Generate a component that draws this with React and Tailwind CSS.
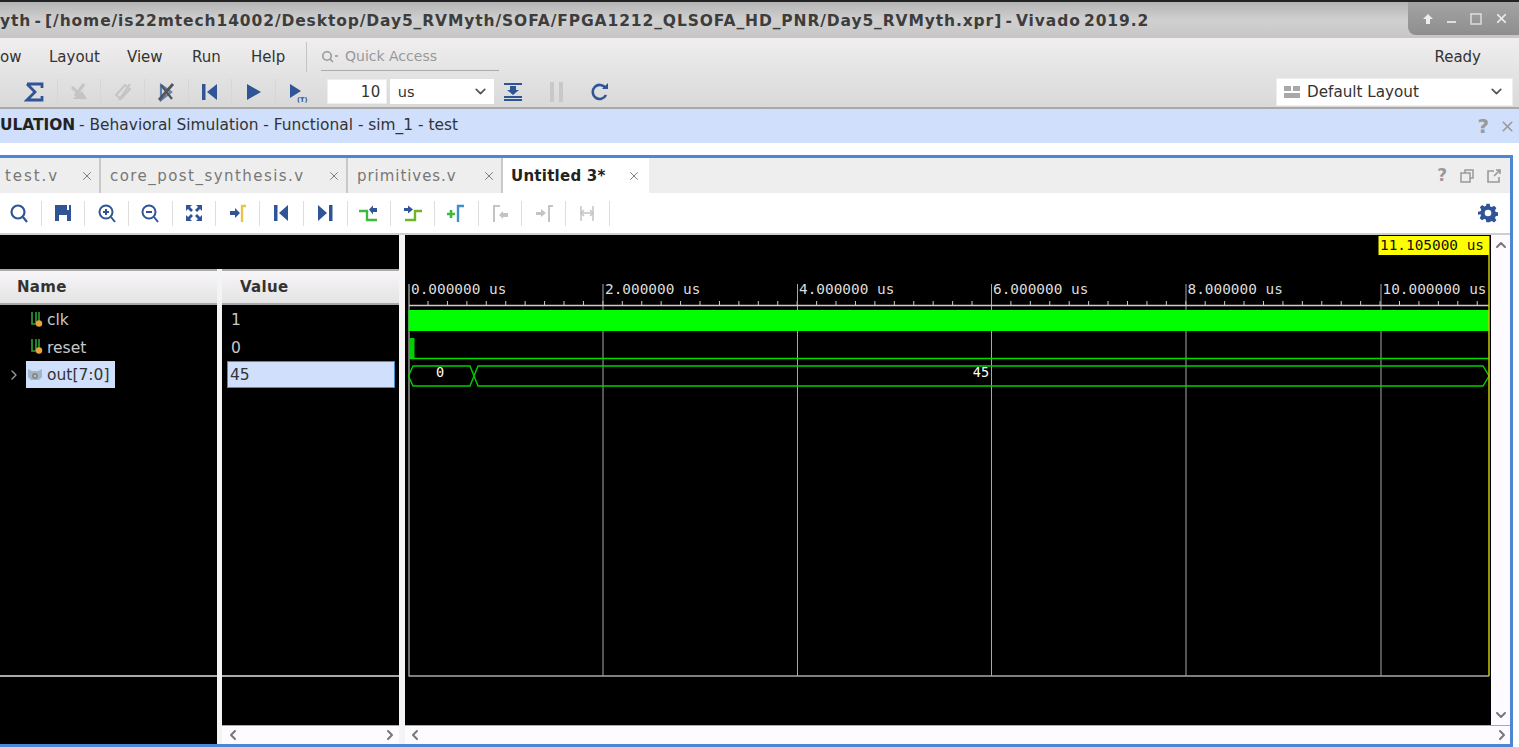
import { ChevronDown, ChevronLeft, ChevronRight, ChevronUp, X } from 'lucide-react';

const BLUE = '#2f5597';
const GREY = '#c4c4c4';

function Ic({ children, w = 22, h = 22 }) {
  return (
    <svg width={w} height={h} viewBox="0 0 22 22" fill="none">
      {children}
    </svg>
  );
}

const topTools = [
  { key: 'sigma', sep: true, el: <path d="M3 3h15v4M18 15v4H3l8-8-8-8" stroke={BLUE} strokeWidth="2.8" /> },
  { key: 'a', sep: true, el: <g><path d="M5 18h14l-5-8z" fill={GREY} /><path d="M4 6l12 12M16 3L7 15" stroke={GREY} strokeWidth="3" /></g> },
  { key: 'b', sep: true, el: <g stroke={GREY} strokeWidth="2"><path d="M4 14l9-10 5 4-9 10z" /><path d="M7 19L18 3" /></g> },
  { key: 'c', sep: true, el: <g strokeWidth="2.2"><path d="M6 4l10 7-10 8z" stroke="#5b7fb8" /><path d="M4 19L18 3" stroke="#555" strokeWidth="2.8" /><path d="M6 4l11 14" stroke="#555" /></g> },
  { key: 'first', sep: true, el: <g fill={BLUE}><rect x="3" y="3" width="3.5" height="16" /><path d="M18 3v16L8 11z" /></g> },
  { key: 'play', sep: true, el: <path d="M4 3l14 8-14 8z" fill={BLUE} /> },
  { key: 'playT', sep: false, el: <g><path d="M3 3l11 7-11 7z" fill={BLUE} /><text x="10" y="21" fontSize="6.5" fontWeight="700" fill={BLUE} fontFamily="DejaVu Sans">(T)</text></g> },
];

const waveTools = [
  <g stroke={BLUE} strokeWidth="2.2"><circle cx="10" cy="10" r="6.5" /><path d="M15 15l4 5" /></g>,
  <path d="M3 3h12v5h2V3h2v16H3zM7 13h8v6H7z" fill={BLUE} fillRule="evenodd" />,
  <g stroke={BLUE} strokeWidth="2"><circle cx="10" cy="10" r="6.5" /><path d="M15 15l4 5M10 7v6M7 10h6" /></g>,
  <g stroke={BLUE} strokeWidth="2"><circle cx="10" cy="10" r="6.5" /><path d="M15 15l4 5M7 10h6" /></g>,
  <g fill={BLUE}><path d="M3 3h6L7 5l3 3-2 2-3-3-2 2zM19 3h-6l2 2-3 3 2 2 3-3 2 2zM3 19h6l-2-2 3-3-2-2-3 3-2-2zM19 19h-6l2-2-3-3 2-2 3 3 2-2z" /></g>,
  <g><path d="M3 9h5V6l5 5-5 5v-3H3z" fill={BLUE} /><path d="M15 20V4h4" stroke="#e8c44a" strokeWidth="2.4" /></g>,
  <g fill={BLUE}><rect x="4" y="3" width="3.5" height="16" /><path d="M18 3v16L9 11z" /></g>,
  <g fill={BLUE}><rect x="15" y="3" width="3.5" height="16" /><path d="M4 3v16l9-8z" /></g>,
  <g><path d="M1 9H9V18H19" stroke="#3fb83f" strokeWidth="2.4" /><path d="M11 7.5l4-4V6h4v4h-4v2.500z" fill={BLUE} /></g>,
  <g><path d="M3 18H13V9H20" stroke="#6fb52a" strokeWidth="2.4" /><path d="M2 6h4V3.500l5 4-5 4V9H2z" fill={BLUE} /></g>,
  <g><path d="M2 12h8M6 8v8" stroke="#3fb83f" strokeWidth="2.6" /><path d="M13 20V4h6" stroke="#3f8fc9" strokeWidth="2.4" /></g>,
  <g><path d="M5 20V4h6" stroke={GREY} strokeWidth="2" /><path d="M19 11h-5V9l-4 4 4 4v-2h5z" fill={GREY} /></g>,
  <g><path d="M16 20V4h4" stroke={GREY} strokeWidth="2" /><path d="M3 10h5V7l5 4-5 4v-2H3z" fill={GREY} /></g>,
  <g stroke={GREY} strokeWidth="1.5"><path d="M5 4v15M17 4v15M6 11h10" /><path d="M8 8l-3 3 3 3M14 8l3 3-3 3" /></g>,
];

function Tab({ label, width, active, tracking }) {
  return (
    <div className={`flex h-full items-center justify-between ${active ? 'bg-white pr-[8px] pl-2 font-bold text-[#222]' : 'border-r-2 border-[#c9c9c9] pr-[5px] pl-[9px] text-[#777]'}`} style={{ width }}>
      <span className={`mt-[1px] ${tracking}`}>{label}</span>
      <X size={14} className="text-[#777]" strokeWidth={1.6} />
    </div>
  );
}

function WaveIcon({ out }) {
  if (out) {
    return (
      <svg width="16" height="16" viewBox="0 0 16 16">
        <path d="M1 2l4 2h6l4-2v8l-3 3H4l-3-3z" fill="#9fb6c6" />
        <circle cx="8" cy="9" r="3" fill="#888" />
        <circle cx="8" cy="9" r="1" fill="#ddd" />
      </svg>
    );
  }
  return (
    <svg width="16" height="18" viewBox="0 0 16 18">
      <path d="M4 1v12h4V1M11 1v9" fill="none" stroke="#2e9e3a" strokeWidth="1.6" />
      <circle cx="11" cy="12.5" r="3.2" fill="#e8a33c" />
    </svg>
  );
}

function WaveChart() {
  const majors = [603, 797.5, 991.5, 1186, 1381];
  const labels = [
    [411, '0.000000 us'],
    [605, '2.000000 us'],
    [799, '4.000000 us'],
    [993, '6.000000 us'],
    [1187.5, '8.000000 us'],
    [1382.5, '10.000000 us'],
  ];
  const minor = [];
  for (let x = 428; x < 1489; x += 19.43) minor.push(x);

  return (
    <svg width="1086" height="490" viewBox="405 235 1086 490" className="block">
      <rect x="405" y="235" width="1086" height="490" fill="#000" />
      {minor.map((x) => (
        <path key={x} d={`M${x} 301v4`} stroke="#ccc" />
      ))}
      {majors.map((x) => (
        <path key={x} d={`M${x} 284V676`} stroke="#a8a8a8" />
      ))}
      <path d="M409 284V676H1489" stroke="#a8a8a8" fill="none" strokeWidth="1.3" />
      <path d="M409 305.500H1489" stroke="#ccc" strokeWidth="1.3" />
      {labels.map(([x, t]) => (
        <text key={t} x={x} y="293.500" fill="#ddd" fontSize="14.4" fontFamily="DejaVu Sans Mono">{t}</text>
      ))}
      <rect x="408.500" y="310" width="1080.500" height="21" fill="#00ff00" />
      <rect x="409" y="338" width="5.500" height="20" fill="#00d000" />
      <path d="M409 358.500H1489" stroke="#00e000" strokeWidth="1.3" />
      <path d="M413 366H470L478 386H1483L1489 376L1483 366H478L470 386H413L408.500 376Z" fill="none" stroke="#00d000" strokeWidth="1.4" />
      <text x="440" y="377" fill="#fff" fontSize="13.500" textAnchor="middle" fontFamily="DejaVu Sans Mono">0</text>
      <text x="981" y="377" fill="#fff" fontSize="13.500" textAnchor="middle" fontFamily="DejaVu Sans Mono">45</text>
      <path d="M1489 255V676" stroke="#c8c800" strokeWidth="1.5" />
      <rect x="1378.500" y="236" width="111" height="19" fill="#ffff00" />
      <text x="1380" y="249.500" fill="#111" fontSize="14.400" fontFamily="DejaVu Sans Mono">11.105000 us</text>
    </svg>
  );
}

export default function App() {
  return (
    <div className="h-[747px] w-[1519px] overflow-hidden bg-white text-[15px] text-[#333] [font-family:'DejaVu_Sans',sans-serif]">
      {/* title bar */}
      <div className="flex h-[38px] items-start justify-between border-t-[2px] border-[#222] bg-gradient-to-b from-[#b4b4b4] via-[#d0d0d0] to-[#c6c6c6]">
        <span className="mt-[10px] text-[15.5px] leading-[18px] font-bold tracking-[0.89px] whitespace-nowrap text-[#3d3d3d] [word-spacing:-3px]">
          yth - [/home/is22mtech14002/Desktop/Day5_RVMyth/SOFA/FPGA1212_QLSOFA_HD_PNR/Day5_RVMyth.xpr] - Vivado 2019.2
        </span>
        <div className="flex h-[33px] w-[111px] items-center justify-around rounded-bl-lg bg-gradient-to-b from-[#a4a4a4] to-[#8e8e8e] pr-1 pl-2 text-white">
          <svg width="12" height="12" viewBox="0 0 12 12"><path d="M6 1l5 5H8v5H4V6H1z" fill="#eee" /></svg>
          <svg width="12" height="12" viewBox="0 0 12 12"><rect x="1" y="8" width="9" height="2" fill="#ddd" /></svg>
          <svg width="12" height="12" viewBox="0 0 12 12"><rect x="1" y="1" width="10" height="10" fill="none" stroke="#ddd" strokeWidth="1.5" /></svg>
          <X size={15} strokeWidth={2.8} className="text-[#eee]" />
        </div>
      </div>

      {/* menu + toolbar */}
      <div className="h-[71px] border-b-2 border-[#a9a9a9] bg-gradient-to-b from-[#f0eeef] to-[#d9d9d9]">
        <div className="flex h-[38px] items-center">
          <div className="flex items-center text-[15px]">
            <span className="w-[49px]">ow</span>
            <span className="w-[78px]">Layout</span>
            <span className="w-[65px]">View</span>
            <span className="w-[59px]">Run</span>
            <span className="w-[55px]">Help</span>
          </div>
          <div className="h-[30px] w-px bg-[#c4c4c4]" />
          <div className="ml-[14px] flex h-[28px] w-[178px] items-center gap-[6px] border-b border-[#aaa] text-[14px] text-[#999]">
            <svg width="18" height="14" viewBox="0 0 18 14" fill="none" stroke="#999" strokeWidth="1.6"><circle cx="6" cy="6" r="4.200" /><path d="M9 9l3 3" /><path d="M14 6h3" /></svg>
            <span>Quick Access</span>
          </div>
          <span className="mr-[38px] ml-auto text-[15px]">Ready</span>
        </div>
        <div className="flex h-[31px] items-center">
          <div className="flex w-[14px] shrink-0" />
          {topTools.map((t) => (
            <div key={t.key} className={`flex h-[26px] w-[43.7px] items-center justify-center ${t.sep ? 'border-r border-[#d6d6d6]' : ''}`}>
              <Ic>{t.el}</Ic>
            </div>
          ))}
          <div className="ml-[7px] flex h-[25px] w-[60px] items-center justify-end border border-[#eee] bg-white pt-[2px] pr-[5px] tracking-[0.5px]">10</div>
          <div className="ml-[3px] flex h-[25px] w-[104px] items-center justify-between bg-white pr-[5px] pl-[8px] text-[14.5px]">
            <span className="mt-[2px]">us</span>
            <ChevronDown size={17} className="text-[#555]" strokeWidth={2.4} />
          </div>
          <div className="flex h-[26px] w-[38px] items-center justify-center">
            <svg width="20" height="20" viewBox="0 0 20 20" fill={BLUE}><path d="M1 1h18v2H1zM1 14h18v2H1zM1 17h18v2H1zM7 4h6v4h3l-6 5-6-5h3z" /></svg>
          </div>
          <div className="flex h-[26px] w-[50px] items-center justify-center gap-[5px]">
            <div className="h-[20px] w-[4px] bg-[#c8c8c8]" />
            <div className="h-[20px] w-[4px] bg-[#c8c8c8]" />
          </div>
          <div className="flex h-[26px] w-[36px] items-center justify-center">
            <svg width="20" height="20" viewBox="0 0 20 20" fill="none"><path d="M16 13a7 7 0 1 1-.5-7" stroke={BLUE} strokeWidth="2.6" /><path d="M12 7h6V1z" fill={BLUE} /></svg>
          </div>
          <div className="mr-[6px] ml-auto flex h-[28px] w-[237px] items-center border border-[#eee] bg-white pr-[7px] pl-[7px] text-[15.2px]">
            <svg width="16" height="14" viewBox="0 0 16 14" fill="#a8a8a8"><path d="M0 1h7v5H0zM9 1h7v5H9zM0 8h16v5H0z" /></svg>
            <span className="mt-[1px] ml-[7px]">Default Layout</span>
            <ChevronDown size={17} className="ml-auto text-[#555]" strokeWidth={2.4} />
          </div>
        </div>
      </div>

      {/* flow navigator heading */}
      <div className="flex h-[34px] items-center justify-between bg-[#cfdffc] pr-[3px] text-[15.4px]">
        <span><b className="text-[#222]">ULATION</b><span className="ml-[-1px]"> - Behavioral Simulation - Functional - sim_1 - test</span></span>
        <div className="flex items-center gap-[10px] text-[#999]">
          <span className="text-[20px] leading-none font-bold">?</span>
          <X size={17} strokeWidth={2.2} />
        </div>
      </div>

      <div className="h-[12px]" />

      {/* waveform window */}
      <div className="flex h-[592px] w-[1513px] flex-col border-y-[3px] border-r-[3px] border-[#4f86d4]">
        <div className="flex h-[35px] shrink-0 items-center bg-[#eeeeee] text-[15px]">
          <div className="ml-[-4px] flex h-full">
            <Tab label="test.v" width={105} tracking="tracking-[1.95px]" />
            <Tab label="core_post_synthesis.v" width={247} tracking="tracking-[1.45px]" />
            <Tab label="primitives.v" width={155} tracking="tracking-[0.95px]" />
            <Tab label="Untitled 3*" width={146} active tracking="tracking-[0.25px]" />
          </div>
          <div className="ml-auto flex items-center gap-[13px] pr-[9px] text-[#999]">
            <span className="text-[17px] leading-none font-bold">?</span>
            <svg width="14" height="14" viewBox="0 0 14 14" fill="none" stroke="#999" strokeWidth="1.5"><path d="M5 4V1h8v8h-3M1 4h9v9H1z" /></svg>
            <svg width="14" height="14" viewBox="0 0 14 14" fill="none" stroke="#999" strokeWidth="1.6"><path d="M7 2H1v11h11V8M7 7l6-6M9 1h4v4" /></svg>
          </div>
        </div>

        <div className="flex h-[40px] shrink-0 items-center bg-white">
          <div className="ml-[-2px] flex">
            {waveTools.map((el, i) => (
              <div key={i} className="flex h-[25px] w-[43.7px] items-center justify-center border-r border-[#dedede]">
                <Ic>{el}</Ic>
              </div>
            ))}
          </div>
          <svg className="mr-[12px] ml-auto" width="20" height="20" viewBox="0 0 24 24" fill={BLUE}>
            <path fillRule="evenodd" d="M10 1h4l.6 3.100 2 .8L19.300 3.200l2.800 2.800-1.700 2.700.8 2 3.100.6v4l-3.100.6-.8 2 1.700 2.700-2.800 2.800-2.700-1.700-2 .8L14 23h-4l-.6-3.100-2-.8-2.700 1.700-2.800-2.800 1.700-2.700-.8-2L0 14.500v-4l3.100-.6.8-2L2.200 5.200 5 2.400l2.700 1.700 2-.8zM12 8a4 4 0 1 0 0 8 4 4 0 0 0 0-8z" />
          </svg>
        </div>

        <div className="flex min-h-0 flex-1 border-t-2 border-[#cfcfcf] bg-[#f2f2f2]">
          <div className="flex w-[399px] shrink-0 flex-col">
            <div className="h-[34px] shrink-0 bg-black" />
            <div className="flex min-h-0 flex-1">
              {/* name column */}
              <div className="flex w-[217px] shrink-0 flex-col bg-black">
                <div className="flex h-[36px] items-center border-y-2 border-[#a9a9a9] bg-gradient-to-b from-[#f7f5f8] to-[#e4e4e4] pt-[1px] pl-[17px] text-[15px] font-bold tracking-[0.3px] text-[#333]">Name</div>
                <div className="h-[372px] border-b-2 border-[#a9a9a9] pt-[1px] text-[15.5px] text-[#c8c8c8]">
                  <div className="flex h-[27.5px] items-center pl-[28px]"><WaveIcon /><span className="mt-[2px] ml-[3px]">clk</span></div>
                  <div className="flex h-[27.5px] items-center pl-[28px]"><WaveIcon /><span className="mt-[2px] ml-[3px]">reset</span></div>
                  <div className="flex h-[27.5px] items-center">
                    <ChevronRight size={16} className="ml-[6px] text-[#999]" strokeWidth={2} />
                    <div className="ml-[4px] flex h-[27px] w-[89px] items-center bg-[#cfdffc] pl-[1px] text-[#333]">
                      <WaveIcon out />
                      <span className="mt-[1px] ml-[4px]">out[7:0]</span>
                    </div>
                  </div>
                </div>
              </div>
              <div className="w-[5px] shrink-0 bg-[#f4f4f4]" />

              {/* value column */}
              <div className="flex w-[177px] shrink-0 flex-col">
                <div className="flex h-[36px] items-center border-y-2 border-[#a9a9a9] bg-gradient-to-b from-[#f7f5f8] to-[#e4e4e4] pt-[1px] pl-[18px] text-[15px] font-bold tracking-[0.3px] text-[#333]">Value</div>
                <div className="h-[372px] border-b-2 border-[#a9a9a9] bg-black pt-[1px] text-[15.5px] text-[#c8c8c8]">
                  <div className="flex h-[27.5px] items-center pt-[2px] pl-[9px]">1</div>
                  <div className="flex h-[27.5px] items-center pt-[2px] pl-[9px]">0</div>
                  <div className="ml-[5px] flex h-[27px] w-[168px] items-center border border-[#3f8fc9] bg-[#cfdffc] pt-[2px] pl-[2px] text-[#333]">45</div>
                </div>
                <div className="h-[48px] bg-black" />
                <div className="flex flex-1 items-center justify-between border-t border-[#aaa] bg-[#fdfbff] pr-[1px] pl-[3px]">
                  <ChevronLeft size={16} strokeWidth={3} className="text-[#777]" />
                  <ChevronRight size={16} strokeWidth={3} className="text-[#777]" />
                </div>
              </div>
            </div>
          </div>
          <div className="w-[6px] shrink-0 bg-[#f4f4f4]" />

          {/* wave canvas */}
          <div className="flex w-[1105px] shrink-0 flex-col">
            <div className="flex h-[490px] shrink-0">
              <WaveChart />
              <div className="flex w-[19px] flex-col items-center justify-between bg-[#fdfbff] py-[2px]">
                <ChevronUp size={16} strokeWidth={3} className="text-[#777]" />
                <ChevronDown size={16} strokeWidth={3} className="text-[#777]" />
              </div>
            </div>
            <div className="flex flex-1 items-center justify-between border-t border-[#aaa] bg-[#fdfbff] pr-[0px] pl-[2px]">
              <ChevronLeft size={16} strokeWidth={3} className="text-[#777]" />
              <ChevronRight size={16} strokeWidth={3} className="text-[#777]" />
            </div>
          </div>
        </div>
      </div>
    </div>
  );
}
